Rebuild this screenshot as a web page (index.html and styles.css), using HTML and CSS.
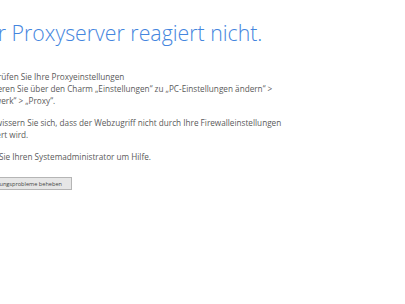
FILE: index.html
```html
<!DOCTYPE html>
<html lang="de">

<head>
    <meta charset="UTF-8">
    <meta name="viewport" content="width=device-width, initial-scale=1.0">
    <title>Der Proxyserver reagiert nicht</title>
    <link rel="stylesheet" href="styles.css">
</head>

<body>
    <div class="page">
        <h1 class="title">Der Proxyserver reagiert nicht.</h1>

        <div class="tips">
            <p>Überprüfen Sie Ihre Proxyeinstellungen<br>
                Navigieren Sie über den Charm „Einstellungen“ zu „PC-Einstellungen ändern“ &gt;<br>
                „Netzwerk“ &gt; „Proxy“.</p>
            <p>Vergewissern Sie sich, dass der Webzugriff nicht durch Ihre Firewalleinstellungen<br>
                blockiert wird.</p>
            <p>Bitten Sie Ihren Systemadministrator um Hilfe.</p>
        </div>

        <button class="fix">Verbindungsprobleme beheben</button>
    </div>
</body>

</html>
```

FILE: styles.css
```css
* {
    padding: 0;
    margin: 0;
    border: 0;
}

body {
    background: #fff;
    font-family: "Open Sans", "Noto Sans", sans-serif;
    overflow: hidden;
}

.page {
    margin-left: -26px;
    padding-top: 18px;
}

.title {
    margin-left: -3px;
    font-weight: 300;
    font-size: 21.3px;
    line-height: 30px;
    color: #4485de;
    white-space: nowrap;
}

.tips {
    margin-top: 23px;
    font-size: 8.2px;
    line-height: 12px;
    color: #5a5a5a;
    white-space: nowrap;
}

.tips p {
    margin-bottom: 10px;
}

.fix {
    display: block;
    margin-top: 14px;
    margin-left: -4px;
    padding: 0 9px 0 8px;
    height: 13px;
    font-family: inherit;
    font-size: 5.6px;
    color: #444;
    background: #e6e6e6;
    border: 1px solid #b5b5b5;
}
```
